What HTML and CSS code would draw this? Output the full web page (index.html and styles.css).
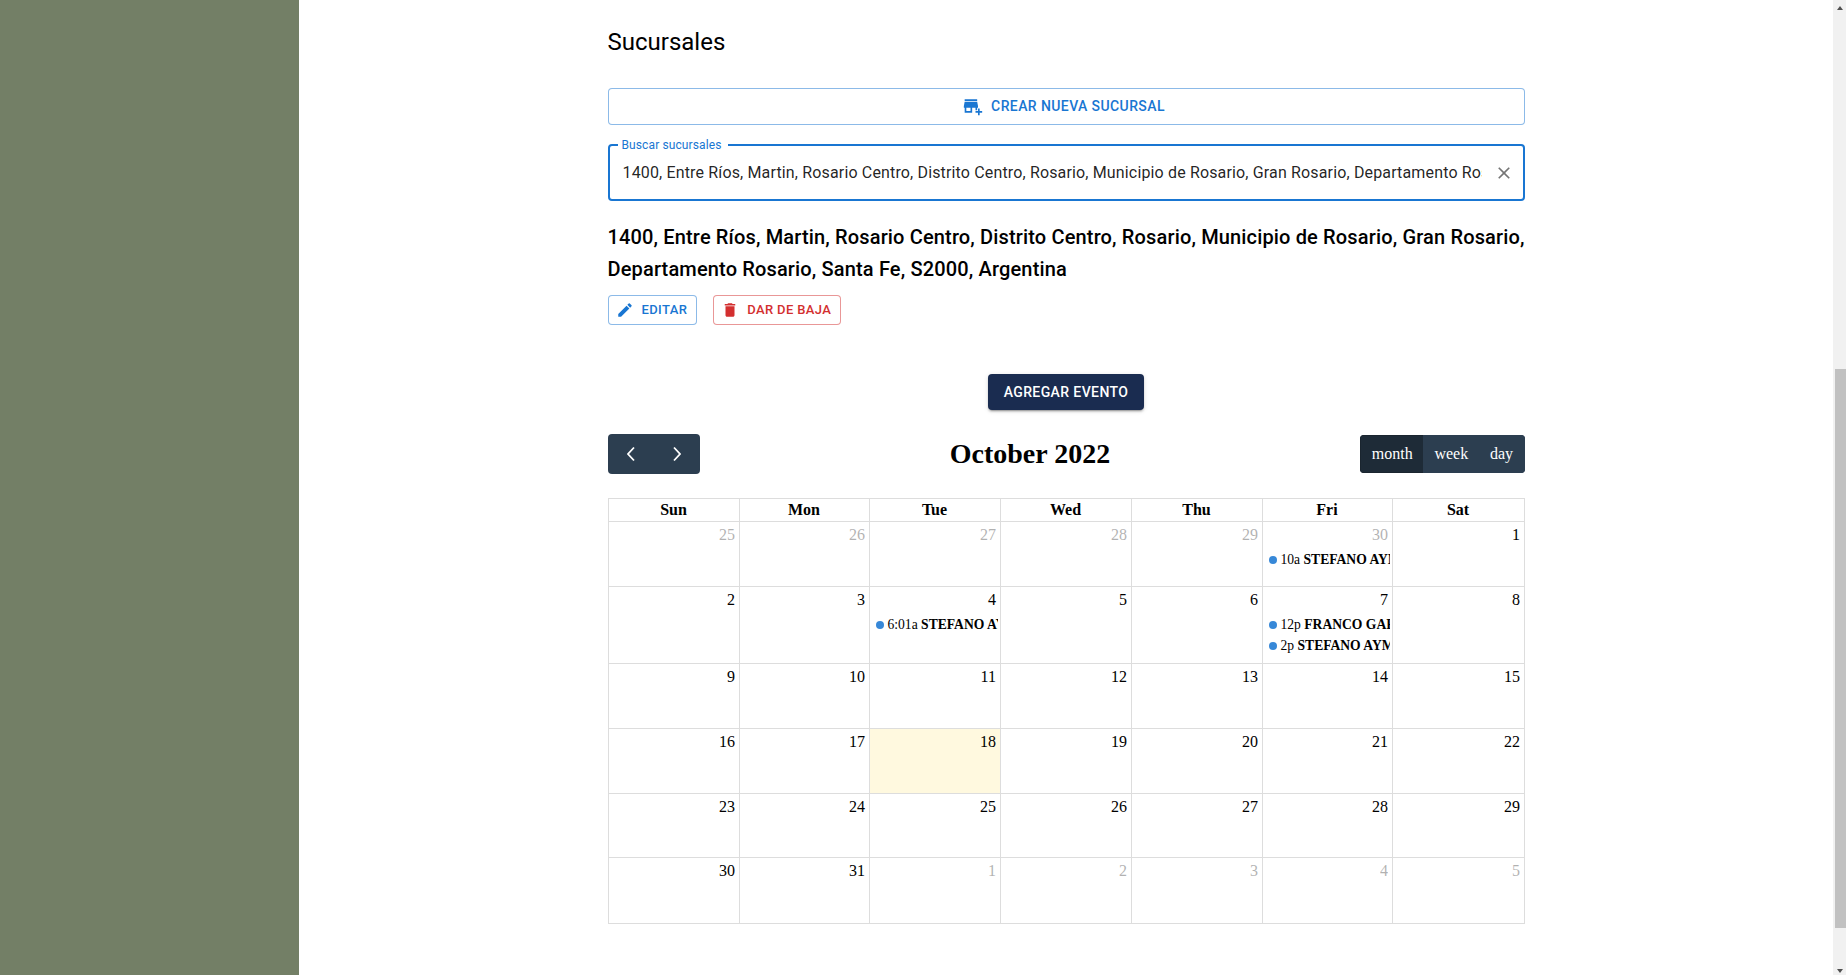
FILE: index.html
```html
<!DOCTYPE html>
<html lang="es">
<head>
<meta charset="utf-8">
<title>Sucursales</title>
<link rel="stylesheet" href="styles.css">
</head>
<body>
<div class="app">
  <aside class="sidebar"></aside>
  <main class="main">
    <div class="content">
      <h1 class="title">Sucursales</h1>
      <button class="btn btn-wide">
        <svg class="icon" viewBox="0 0 24 24"><path d="M15 17h2v-3h1v-2l-1-5H2l-1 5v2h1v6h9v-6h4v3zm-6 1H4v-4h5v4zM2 4h15v2H2z"/><path d="M20 18v-3h-2v3h-3v2h3v3h2v-3h3v-2z"/></svg>
        Crear nueva sucursal
      </button>
      <div class="field">
        <label class="field-label" for="buscar">Buscar sucursales</label>
        <input id="buscar" class="field-input" type="text" readonly value="1400, Entre Ríos, Martin, Rosario Centro, Distrito Centro, Rosario, Municipio de Rosario, Gran Rosario, Departamento Rosario, Santa Fe, S2000, Argentina">
        <svg class="clear" viewBox="0 0 24 24"><path d="M19 6.41 17.59 5 12 10.59 6.41 5 5 6.41 10.59 12 5 17.59 6.41 19 12 13.41 17.59 19 19 17.59 13.41 12z"/></svg>
      </div>
      <h2 class="address">1400, Entre Ríos, Martin, Rosario Centro, Distrito Centro, Rosario, Municipio de Rosario, Gran Rosario, Departamento Rosario, Santa Fe, S2000, Argentina</h2>
      <div class="actions">
        <button class="btn btn-small">
          <svg class="icon-small" viewBox="0 0 24 24"><path d="M3 17.25V21h3.75L17.81 9.94l-3.75-3.75L3 17.25zM20.71 7.04c.39-.39.39-1.02 0-1.41l-2.34-2.34a.9959.9959 0 0 0-1.41 0l-1.83 1.83 3.75 3.75 1.83-1.83z"/></svg>
          Editar
        </button>
        <button class="btn btn-small btn-danger">
          <svg class="icon-small" viewBox="0 0 24 24"><path d="M6 19c0 1.1.9 2 2 2h8c1.1 0 2-.9 2-2V7H6v12zM19 4h-3.5l-1-1h-5l-1 1H5v2h14V4z"/></svg>
          Dar de baja
        </button>
      </div>
      <div class="add-row"><button class="btn-add">Agregar evento</button></div>
      <div class="toolbar">
        <div class="nav-group">
          <button class="nav-btn"><svg viewBox="0 0 16 16"><path d="M11 1.500 5 8l6 6.500"/></svg></button>
          <button class="nav-btn"><svg viewBox="0 0 16 16"><path d="M5 1.500 11 8l-6 6.500"/></svg></button>
        </div>
        <h2 class="cal-title">October 2022</h2>
        <div class="view-group">
          <button class="view-btn view-active">month</button>
          <button class="view-btn">week</button>
          <button class="view-btn">day</button>
        </div>
      </div>
      <table class="cal">
        <colgroup><col class="c1"><col class="c2"><col class="c3"><col class="c4"><col class="c5"><col class="c6"><col></colgroup>
        <thead>
          <tr><th>Sun</th><th>Mon</th><th>Tue</th><th>Wed</th><th>Thu</th><th>Fri</th><th>Sat</th></tr>
        </thead>
        <tbody>
          <tr class="row-a">
            <td class="other"><div class="num">25</div></td>
            <td class="other"><div class="num">26</div></td>
            <td class="other"><div class="num">27</div></td>
            <td class="other"><div class="num">28</div></td>
            <td class="other"><div class="num">29</div></td>
            <td><div class="num dim">30</div><div class="event"><i class="dot"></i>10a <b>STEFANO AYMA</b></div></td>
            <td><div class="num">1</div></td>
          </tr>
          <tr class="row-b">
            <td><div class="num">2</div></td>
            <td><div class="num">3</div></td>
            <td><div class="num">4</div><div class="event"><i class="dot"></i>6:01a <b>STEFANO AYMA</b></div></td>
            <td><div class="num">5</div></td>
            <td><div class="num">6</div></td>
            <td><div class="num">7</div><div class="event"><i class="dot"></i>12p <b>FRANCO GARCIA</b></div><div class="event"><i class="dot"></i>2p <b>STEFANO AYMA</b></div></td>
            <td><div class="num">8</div></td>
          </tr>
          <tr class="row-a">
            <td><div class="num">9</div></td>
            <td><div class="num">10</div></td>
            <td><div class="num">11</div></td>
            <td><div class="num">12</div></td>
            <td><div class="num">13</div></td>
            <td><div class="num">14</div></td>
            <td><div class="num">15</div></td>
          </tr>
          <tr class="row-a">
            <td><div class="num">16</div></td>
            <td><div class="num">17</div></td>
            <td class="today"><div class="num">18</div></td>
            <td><div class="num">19</div></td>
            <td><div class="num">20</div></td>
            <td><div class="num">21</div></td>
            <td><div class="num">22</div></td>
          </tr>
          <tr class="row-c">
            <td><div class="num">23</div></td>
            <td><div class="num">24</div></td>
            <td><div class="num">25</div></td>
            <td><div class="num">26</div></td>
            <td><div class="num">27</div></td>
            <td><div class="num">28</div></td>
            <td><div class="num">29</div></td>
          </tr>
          <tr class="row-d">
            <td><div class="num">30</div></td>
            <td><div class="num">31</div></td>
            <td class="other"><div class="num">1</div></td>
            <td class="other"><div class="num">2</div></td>
            <td class="other"><div class="num">3</div></td>
            <td class="other"><div class="num">4</div></td>
            <td class="other"><div class="num">5</div></td>
          </tr>
        </tbody>
      </table>
    </div>
  </main>
  <div class="scrollbar">
    <span class="arrow-up"></span>
    <div class="thumb-space"></div>
    <div class="thumb"></div>
    <div class="track-end"></div>
    <span class="arrow-down"></span>
  </div>
</div>
</body>
</html>
```
FILE: styles.css
```css
* { box-sizing: border-box; }
html, body { margin: 0; height: 975px; overflow: hidden; background: #fff; }
body { font-family: Roboto, "Liberation Sans", sans-serif; color: rgba(0,0,0,.87); }
button { font-family: inherit; cursor: pointer; }

.app { display: flex; height: 975px; }
.sidebar { flex: 0 0 299px; background: #737f66; }
.main { flex: 1; min-width: 0; overflow: hidden; }
.content { width: 917px; margin: 0 auto; padding-top: 26px; }

.title { margin: 0 0 30px; font-size: 24px; font-weight: 400; line-height: 32px; color: #000; }

.btn {
  display: inline-flex; align-items: center; justify-content: center;
  background: #fff; color: #1976d2; border: 1px solid rgba(25,118,210,.5); border-radius: 4px;
  font-size: 14px; font-weight: 500; letter-spacing: .02857em; text-transform: uppercase; line-height: 1.75;
}
.btn-wide { width: 100%; padding: 5px 15px; }
.icon { width: 20px; height: 20px; margin: 0 8px 0 -4px; fill: currentColor; }
.btn-small { padding: 3px 9px; font-size: 13px; }
.btn-danger { color: #d32f2f; border-color: rgba(211,47,47,.5); }
.icon-small { width: 18px; height: 18px; margin: 0 8px 0 -2px; fill: currentColor; }

.field {
  position: relative; display: flex; align-items: center; height: 57px; margin-top: 19px;
  border: 2px solid #1976d2; border-radius: 4px; padding: 0 9px 0 13px;
}
.field-label {
  position: absolute; top: -8px; left: 8px; padding: 0 6px 0 4px; background: #fff;
  font-size: 12px; line-height: 15px; letter-spacing: .00938em; color: #1976d2;
}
.field-input {
  flex: 1; min-width: 0; border: 0; outline: 0; padding: 0; background: transparent;
  font: 400 16px/23px Roboto, sans-serif; letter-spacing: .00938em; color: rgba(0,0,0,.87);
}
.clear { flex: none; width: 20px; height: 20px; margin: 1px 0 0 11.5px; fill: rgba(0,0,0,.54); }

.address { margin: 20px -2px 10px 0; font-size: 20px; font-weight: 500; line-height: 32px; letter-spacing: .0075em; color: #000; }
.actions { display: flex; gap: 16px; }

.add-row { display: flex; justify-content: center; margin-top: 49px; }
.btn-add {
  height: 36px; padding: 0 16px; border: 0; border-radius: 4px; background: #1a2c50; color: #fff;
  font-size: 14px; font-weight: 500; letter-spacing: .02857em; text-transform: uppercase;
  box-shadow: 0 3px 1px -2px rgba(0,0,0,.2), 0 2px 2px 0 rgba(0,0,0,.14), 0 1px 5px 0 rgba(0,0,0,.12);
}

.toolbar { display: flex; align-items: center; justify-content: space-between; margin: 24px 0; font-family: "Liberation Serif", serif; }
.nav-group { display: flex; height: 40px; border-radius: 4px; overflow: hidden; }
.nav-btn { width: 46px; padding: 0; border: 0; background: #2c3e50; display: flex; align-items: center; justify-content: center; }
.nav-btn svg { width: 16px; height: 16px; fill: none; stroke: #fff; stroke-width: 1.8; }
.cal-title { margin: 0; font-size: 28px; font-weight: 700; line-height: 1.2; color: #000; }
.view-group { display: flex; border-radius: 4px; overflow: hidden; }
.view-btn {
  padding: 6px 10.4px; border: 1px solid #2c3e50; background: #2c3e50; color: #fff;
  font: 400 16px/24px "Liberation Serif", serif;
}
.view-btn + .view-btn { margin-left: -1px; }
.view-active { background: #1e2b37; border-color: #1a252f; }

.cal { width: 917px; table-layout: fixed; border-collapse: collapse; font-family: "Liberation Serif", serif; color: #000; font-size: 16px; }
.c1, .c3, .c4, .c5 { width: 131px; }
.c2, .c6 { width: 130px; }
.cal th, .cal td { border: 1px solid #ddd; padding: 0; }
.cal th { height: 23px; font-weight: 700; line-height: 18px; vertical-align: middle; }
.cal td { vertical-align: top; }
.row-a td { height: 65px; }
.row-b td { height: 77px; }
.row-c td { height: 64px; }
.row-d td { height: 66px; }
.num { padding: 4px 3.5px 4px 4px; text-align: right; line-height: 18px; height: 27px; }
.other .num, .dim { opacity: .3; }
.today { background: #fff9df; }
.event {
  height: 20px; margin: 1px 2px 0; padding: 2px 0 0 1px; overflow: hidden; white-space: nowrap;
  font-size: 13.6px; line-height: 16px;
}
.dot { display: inline-block; width: 8px; height: 8px; margin: 0 4px 0 3px; border-radius: 50%; background: #3788d8; }

.scrollbar { flex: 0 0 13px; display: flex; flex-direction: column; background: #f1f1f1; position: relative; }
.thumb-space { height: 369px; }
.thumb { height: 559px; margin-left: 2px; background: #c1c1c1; }
.track-end { flex: 1; }
.arrow-up, .arrow-down {
  position: absolute; left: 4px; width: 0; height: 0;
  border-left: 3.5px solid transparent; border-right: 3.5px solid transparent;
}
.arrow-up { top: 6px; border-bottom: 4px solid #505050; }
.arrow-down { bottom: 2px; border-top: 4px solid #505050; }
```
